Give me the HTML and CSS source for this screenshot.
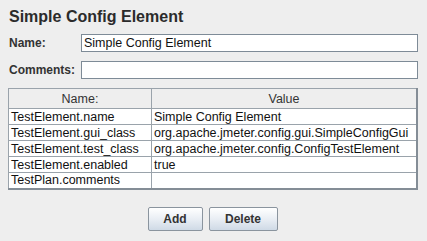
FILE: index.html
```html
<!DOCTYPE html>
<html lang="en">
<head>
    <meta charset="UTF-8">
    <title>Simple Config Element</title>
    <link rel="stylesheet" href="styles.css">
</head>
<body>
    <div class="panel">
        <div class="title">Simple Config Element</div>

        <div class="field">
            <label>Name:</label>
            <input type="text" value="Simple Config Element">
        </div>
        <div class="field">
            <label>Comments:</label>
            <input type="text" value="">
        </div>

        <table class="props">
            <tr>
                <th class="col-name">Name:</th>
                <th>Value</th>
            </tr>
            <tr><td>TestElement.name</td><td>Simple Config Element</td></tr>
            <tr><td>TestElement.gui_class</td><td>org.apache.jmeter.config.gui.SimpleConfigGui</td></tr>
            <tr><td>TestElement.test_class</td><td>org.apache.jmeter.config.ConfigTestElement</td></tr>
            <tr><td>TestElement.enabled</td><td>true</td></tr>
            <tr><td>TestPlan.comments</td><td></td></tr>
        </table>

        <div class="actions">
            <button class="add">Add</button>
            <button class="delete">Delete</button>
        </div>
    </div>
</body>
</html>
```

FILE: styles.css
```css
* {
    margin: 0;
    padding: 0;
    box-sizing: border-box;
    font-family: 'Liberation Sans', Arial, sans-serif;
}

body {
    background-color: #eeeeee;
    color: #222;
    width: 427px;
    height: 241px;
    overflow: hidden;
}

.panel {
    padding: 8px 8px 0 8px;
}

.title {
    font-size: 16px;
    font-weight: bold;
    color: #2b2b2b;
    padding-left: 1px;
    height: 26px;
}

.field {
    display: flex;
    align-items: center;
    margin-bottom: 9px;
}

.field label {
    width: 73px;
    padding-left: 1px;
    font-size: 12px;
    font-weight: bold;
    color: #333;
}

.field input {
    width: 337px;
    height: 18px;
    border: 1px solid #7e8b97;
    background: white;
    font-size: 12.5px;
    padding: 0 2px;
    color: #111;
}

.props {
    width: 410px;
    border-collapse: collapse;
    border: 2px solid #848d96;
    border-top-width: 1px;
    border-left-width: 1px;
    font-size: 12.5px;
    margin-top: 6px;
}

.props th {
    height: 20px;
    font-weight: normal;
    color: #333;
    background: #eeeeee;
    border: 1px solid #9aa3ab;
}

.props .col-name {
    width: 143px;
}

.props td {
    height: 16px;
    background: white;
    border: 1px solid #9aa3ab;
    padding: 0 2px;
    color: #111;
    white-space: nowrap;
}

.actions {
    display: flex;
    justify-content: center;
    gap: 6px;
    margin-top: 17px;
    padding-right: 2px;
}

button {
    height: 24px;
    border: 1px solid #8a949e;
    border-radius: 2px;
    background: linear-gradient(#ffffff, #e9eef4 50%, #cfdae6);
    font-size: 12px;
    font-weight: bold;
    color: #333;
}

.add {
    width: 55px;
}

.delete {
    width: 69px;
}
```
